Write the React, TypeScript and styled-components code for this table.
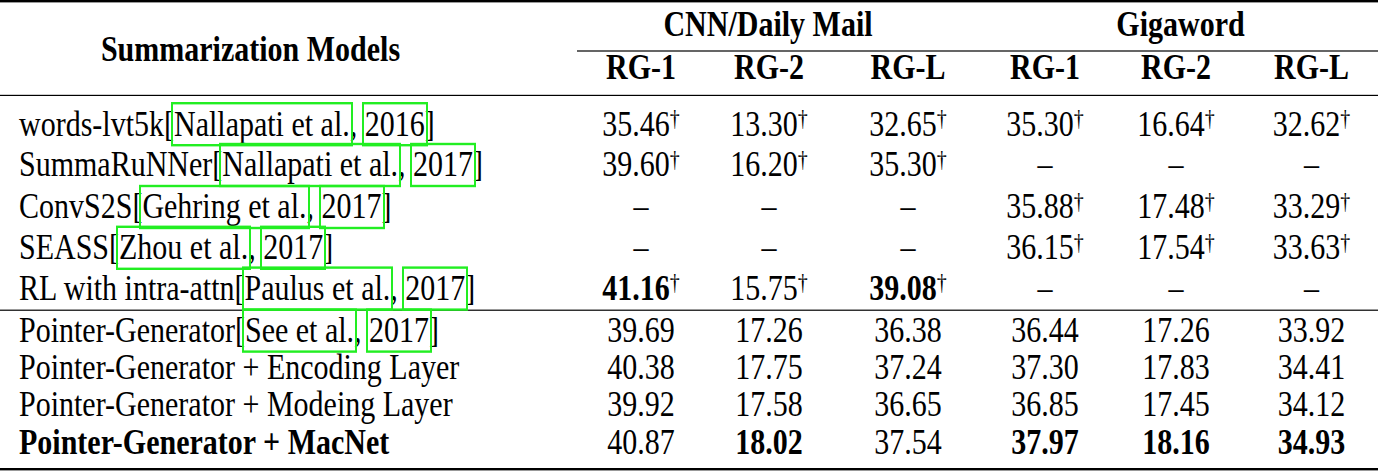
import React from "react";
import styled, { createGlobalStyle } from "styled-components";

const GlobalStyle = createGlobalStyle`
  html, body { margin: 0; padding: 0; background: #ffffff; }
  body { font-family: "Liberation Serif", "Times New Roman", serif; color: #000; }
`;

const Page = styled.div`
  width: 1383px;
  height: 474px;
  overflow: hidden;
  background: #ffffff;
`;

/* The source table is typeset in a tall, narrow Times face: the whole
   table is laid out normally and then stretched vertically. */
const Stage = styled.div`
  width: 1378px;
  transform: scaleY(1.2);
  transform-origin: top left;
`;

const Table = styled.table`
  width: 1378px;
  border-collapse: collapse;
  table-layout: fixed;
  font-size: 30px;
  border-top: 2px solid #000;
  border-bottom: 2px solid #000;
`;

const GroupHead = styled.th<{ $shift?: number }>`
  padding: 0 ${(p) => p.$shift ?? 0}px 4px 0;
  line-height: 35.8px;
  font-weight: bold;
  text-align: center;
  border-bottom: 1px solid #000;
  white-space: nowrap;
`;

const ModelHead = styled.th`
  padding: 0 76px 0 0;
  line-height: 33px;
  font-weight: bold;
  text-align: center;
  vertical-align: middle;
  border-bottom: 1px solid #000;
`;

const SubHead = styled.th`
  padding: 0 0 10.5px 0;
  line-height: 26px;
  font-weight: bold;
  text-align: center;
  border-bottom: 1px solid #000;
`;

const Row = styled.tr<{ $first?: boolean; $last?: boolean; $rule?: boolean; $tall?: boolean }>`
  & > td {
    line-height: ${(p) => (p.$tall ? "34.3px" : "31.1px")};
    padding-top: ${(p) => (p.$first ? "5.8px" : "0")};
    padding-bottom: ${(p) => (p.$last ? "7.5px" : "0")};
    border-top: ${(p) => (p.$rule ? "1px solid #000" : "none")};
  }
`;

const NameCell = styled.td<{ $bold?: boolean }>`
  padding-left: 19px;
  text-align: left;
  white-space: nowrap;
  font-weight: ${(p) => (p.$bold ? "bold" : "normal")};
`;

const Num = styled.td<{ $bold?: boolean }>`
  text-align: center;
  white-space: nowrap;
  font-weight: ${(p) => (p.$bold ? "bold" : "normal")};
`;

const Dagger = styled.span`
  font-size: 20px;
  font-weight: normal;
  line-height: 0;
  vertical-align: 8px;
`;

const Link = styled.span`
  position: relative;
  &::after {
    content: "";
    position: absolute;
    left: -3px;
    right: -3px;
    top: -1px;
    bottom: -3px;
    border: 2px solid #22ee22;
    pointer-events: none;
  }
`;

type Cite = { who: string; year: string };
type Data = {
  name: string;
  cite?: Cite;
  bold?: boolean;
  vals: { v: string; b?: boolean; d?: boolean }[];
};

const dash = { v: "–" };

const rows: Data[] = [
  {
    name: "words-lvt5k",
    cite: { who: "Nallapati et al.", year: "2016" },
    vals: [
      { v: "35.46", d: true },
      { v: "13.30", d: true },
      { v: "32.65", d: true },
      { v: "35.30", d: true },
      { v: "16.64", d: true },
      { v: "32.62", d: true },
    ],
  },
  {
    name: "SummaRuNNer",
    cite: { who: "Nallapati et al.", year: "2017" },
    vals: [{ v: "39.60", d: true }, { v: "16.20", d: true }, { v: "35.30", d: true }, dash, dash, dash],
  },
  {
    name: "ConvS2S",
    cite: { who: "Gehring et al.", year: "2017" },
    vals: [dash, dash, dash, { v: "35.88", d: true }, { v: "17.48", d: true }, { v: "33.29", d: true }],
  },
  {
    name: "SEASS",
    cite: { who: "Zhou et al.", year: "2017" },
    vals: [dash, dash, dash, { v: "36.15", d: true }, { v: "17.54", d: true }, { v: "33.63", d: true }],
  },
  {
    name: "RL with intra-attn",
    cite: { who: "Paulus et al.", year: "2017" },
    vals: [{ v: "41.16", d: true, b: true }, { v: "15.75", d: true }, { v: "39.08", d: true, b: true }, dash, dash, dash],
  },
  {
    name: "Pointer-Generator",
    cite: { who: "See et al.", year: "2017" },
    vals: [{ v: "39.69" }, { v: "17.26" }, { v: "36.38" }, { v: "36.44" }, { v: "17.26" }, { v: "33.92" }],
  },
  {
    name: "Pointer-Generator + Encoding Layer",
    vals: [{ v: "40.38" }, { v: "17.75" }, { v: "37.24" }, { v: "37.30" }, { v: "17.83" }, { v: "34.41" }],
  },
  {
    name: "Pointer-Generator + Modeing Layer",
    vals: [{ v: "39.92" }, { v: "17.58" }, { v: "36.65" }, { v: "36.85" }, { v: "17.45" }, { v: "34.12" }],
  },
  {
    name: "Pointer-Generator + MacNet",
    bold: true,
    vals: [{ v: "40.87" }, { v: "18.02", b: true }, { v: "37.54" }, { v: "37.97", b: true }, { v: "18.16", b: true }, { v: "34.93", b: true }],
  },
];

const colWidths = [577, 128, 128, 150, 124, 138, 133];

export default function App() {
  return (
    <>
      <GlobalStyle />
      <Page>
        <Stage>
          <Table>
            <colgroup>
              {colWidths.map((w, i) => (
                <col key={i} style={{ width: w }} />
              ))}
            </colgroup>
            <thead>
              <tr>
                <ModelHead rowSpan={2}>Summarization Models</ModelHead>
                <GroupHead colSpan={3} $shift={24}>CNN/Daily Mail</GroupHead>
                <GroupHead colSpan={3}>Gigaword</GroupHead>
              </tr>
              <tr>
                {["RG-1", "RG-2", "RG-L", "RG-1", "RG-2", "RG-L"].map((h, i) => (
                  <SubHead key={i}>{h}</SubHead>
                ))}
              </tr>
            </thead>
            <tbody>
              {rows.map((r, i) => (
                <Row
                  key={i}
                  $first={i === 0}
                  $last={i === rows.length - 1}
                  $rule={i === 5}
                  $tall={i < 5}
                >
                  <NameCell $bold={r.bold}>
                    {r.name}
                    {r.cite && (
                      <>
                        [<Link>{r.cite.who}</Link>, <Link>{r.cite.year}</Link>]
                      </>
                    )}
                  </NameCell>
                  {r.vals.map((c, j) => (
                    <Num key={j} $bold={c.b}>
                      {c.v}
                      {c.d && <Dagger>†</Dagger>}
                    </Num>
                  ))}
                </Row>
              ))}
            </tbody>
          </Table>
        </Stage>
      </Page>
    </>
  );
}
